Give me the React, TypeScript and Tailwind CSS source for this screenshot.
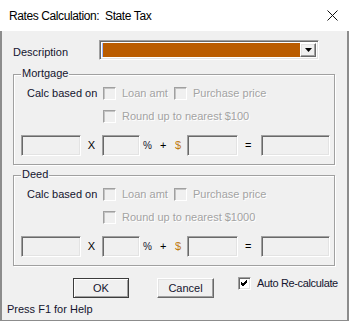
import React from "react";

const sunken =
  "border border-t-[#a0a0a0] border-l-[#a0a0a0] border-r-white border-b-white shadow-[inset_1px_1px_0_#696969,inset_-1px_-1px_0_#e3e3e3]";
const raised =
  "border border-t-white border-l-white border-r-[#696969] border-b-[#696969] shadow-[inset_-1px_-1px_0_#a0a0a0,inset_1px_1px_0_#e3e3e3]";

const Check = ({ label, disabled = true, checked = false, className = "" }: { label: string; disabled?: boolean; checked?: boolean; className?: string }) => (
  <div className={`flex items-center ${className}`}>
    <div
      className={`w-[13px] h-[13px] shrink-0 flex items-center justify-center border border-t-[#a0a0a0] border-l-[#a0a0a0] border-r-white border-b-white ${
        disabled ? "bg-[#f0f0f0] shadow-[inset_1px_1px_0_#c4c4c4]" : "bg-white shadow-[inset_1px_1px_0_#696969,inset_-1px_-1px_0_#e3e3e3]"
      }`}
    >
      {checked && (
        <svg width="9" height="9" viewBox="0 0 9 9">
          <path d="M1 4 L3 6 L7 2 M1 5 L3 7 L7 3 M1 3 L3 5 L7 1" stroke="#000" strokeWidth="1" fill="none" />
        </svg>
      )}
    </div>
    <span
      className={`ml-[6px] whitespace-nowrap leading-[13px] ${
        disabled ? "text-[#a3a3a3] [text-shadow:1px_1px_0_#ffffff]" : "text-[#14142e] tracking-[-0.35px]"
      }`}
    >
      {label}
    </span>
  </div>
);

const Edit = ({ w }: { w: string }) => <div className={`${w} h-[21px] bg-[#f0f0f0] ${sunken}`} />;

const Group = ({ title, step }: { title: string; step: string }) => (
  <div className="relative ml-[11px] w-[322px] h-[91px] border border-[#a0a0a0] shadow-[inset_1px_1px_0_#ffffff,1px_1px_0_#ffffff] pl-[7px] pt-[12px]">
    <span className="absolute left-[7px] top-[-8px] px-[1px] bg-[#f0f0f0] leading-[13px] text-[#14142e]">{title}</span>

    {/* Calc based on */}
    <div className="flex items-center h-[13px] ml-[6px]">
      <span className="w-[76px] text-[#14142e] leading-[13px] whitespace-nowrap">Calc based on</span>
      <Check label="Loan amt" className="w-[71px]" />
      <Check label="Purchase price" />
    </div>
    <Check label={`Round up to nearest ${step}`} className="mt-[10px] ml-[82px]" />

    {/* Formula row */}
    <div className="flex items-center mt-[12px]">
      <Edit w="w-[60px]" />
      <span className="w-[21px] text-center text-black">X</span>
      <Edit w="w-[38px]" />
      <span className="ml-[3px] w-[17px] text-[10px] text-[#14142e]">%</span>
      <span className="w-[15px] text-black">+</span>
      <span className="w-[12px] text-[#c07a10]">$</span>
      <Edit w="w-[51px]" />
      <span className="w-[23px] pl-[7px] text-black">=</span>
      <Edit w="w-[69px]" />
    </div>
  </div>
);

export default function App() {
  return (
    <div className="w-[349px] h-[321px] flex flex-col bg-white font-['Liberation_Sans',Arial,sans-serif] text-[11px] overflow-hidden">
      {/* Title bar */}
      <div className="h-[31px] shrink-0 flex items-center justify-between pl-[9px] pr-[11px] bg-white">
        <span className="text-[12px] tracking-[-0.4px] text-black whitespace-pre">Rates Calculation:  State Tax</span>
        <svg width="11" height="11" viewBox="0 0 11 11">
          <path d="M0.5 0.5 L10.5 10.5 M10.5 0.5 L0.5 10.5" stroke="#111" strokeWidth="1" />
        </svg>
      </div>

      <div className="flex-1 flex flex-col bg-[#f0f0f0] border-l-2 border-r-2 border-b border-[#8c8c8c]">
        {/* Description */}
        <div className="flex items-center mt-[9px] ml-[11px] h-[20px]">
          <span className="w-[86px] pt-[4px] text-[#14142e]">Description</span>
          <div className={`w-[220px] h-[20px] flex bg-white p-[2px] ${sunken}`}>
            <div className="flex-1 h-full bg-[#ba5c00] border-l border-[#9cb8ff]" />
            <div className={`w-[16px] h-full bg-[#f0f0f0] flex items-center justify-center ${raised}`}>
              <svg width="7" height="4" viewBox="0 0 7 4">
                <path d="M0 0 H7 L3.5 4 Z" fill="#000" />
              </svg>
            </div>
          </div>
        </div>

        <div className="mt-[14px]">
          <Group title="Mortgage" step="$100" />
        </div>
        <div className="mt-[10px]">
          <Group title="Deed" step="$1000" />
        </div>

        {/* Buttons */}
        <div className="flex items-start mt-[12px] ml-[71px]">
          <button className="w-[56px] h-[20px] bg-[#f0f0f0] border border-[#3c3c3c] shadow-[inset_1px_1px_0_#ffffff,inset_-1px_-1px_0_#a0a0a0] text-[#14142e] leading-none">
            OK
          </button>
          <button className={`ml-[28px] w-[57px] h-[20px] bg-[#f0f0f0] ${raised} text-[#14142e] leading-none`}>Cancel</button>
          <Check label="Auto Re-calculate" disabled={false} checked className="ml-[24px] -mt-[1px]" />
        </div>

        <div className="mt-[5px] ml-[5px] leading-[13px] text-[#14142e]">Press F1 for Help</div>
      </div>
    </div>
  );
}
